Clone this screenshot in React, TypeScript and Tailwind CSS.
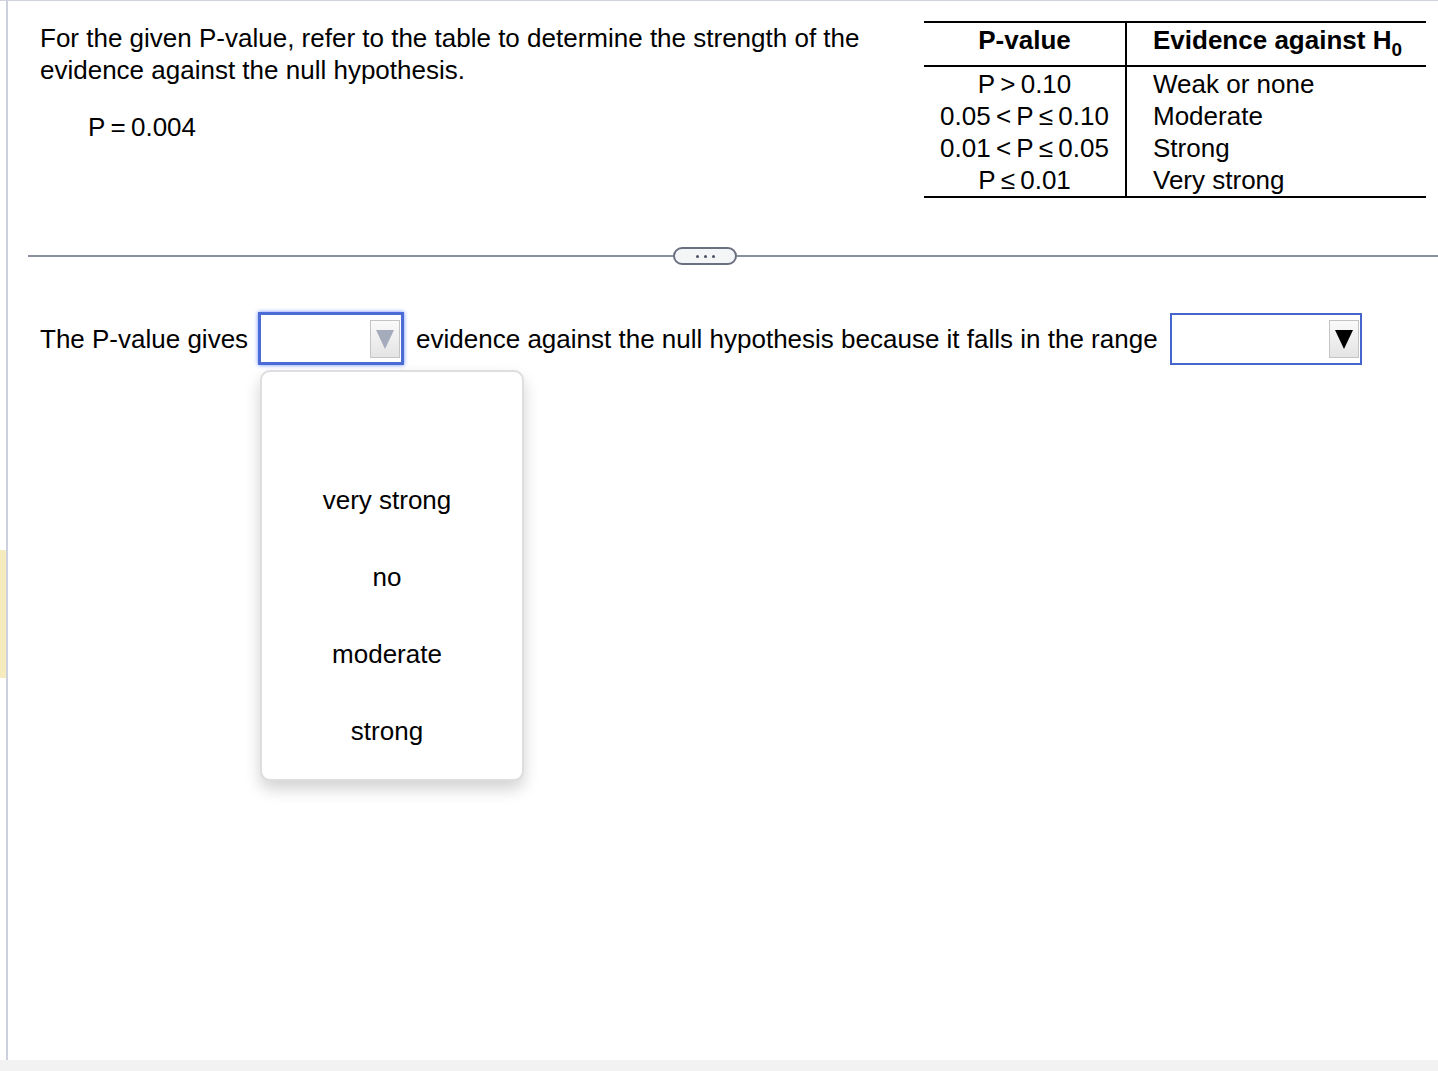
import React from "react";

const T = "\u2009";

function Caret({ color }: { color: string }) {
  return (
    <div className="h-full w-[30px] flex items-center justify-center bg-gradient-to-b from-[#fafafa] to-[#e4e4e4] border border-[#c4c4c4]">
      <svg width="20" height="22" viewBox="0 0 20 22">
        <polygon points="1,2 19,2 10,21" fill={color} />
      </svg>
    </div>
  );
}

export default function App() {
  return (
    <div className="w-[1438px] h-[1071px] bg-white flex flex-col overflow-hidden font-['Liberation_Sans',Arial,sans-serif] text-[26px] text-black">
      <div className="h-px bg-[#cfd3df] shrink-0" />
      <div className="flex flex-1 min-h-0">
        <div className="w-[6px] flex flex-col shrink-0">
          <div className="h-[549px]" />
          <div className="h-[128px] bg-[#f5ebbd]" />
        </div>
        <div className="w-[2px] bg-[#cdd1de] shrink-0" />
        <div className="flex-1 relative">
          {/* top section */}
          <div className="flex justify-between pl-[32px] pr-[12px] pt-[20px]">
            <div className="pt-[1px] leading-[32px] w-[860px]">
              <div>
                For the given P-value, refer to the table to determine the strength of the
                evidence against the null hypothesis.
              </div>
              <div className="pl-[48px] mt-[25px]">P{T}={T}0.004</div>
            </div>
            <div className="w-[502px] shrink-0">
              <div className="flex h-[46px] border-t-2 border-b-2 border-black font-bold leading-[32px]">
                <div className="w-[203px] border-r-2 border-black text-center pt-[1px]">P-value</div>
                <div className="flex-1 pl-[26px] pt-[1px]">
                  Evidence against H
                  <span className="text-[19px] relative top-[7px]">0</span>
                </div>
              </div>
              <div className="flex border-b-2 border-black leading-[32px]">
                <div className="w-[203px] border-r-2 border-black text-center pt-px">
                  <div>P{T}&gt;{T}0.10</div>
                  <div>0.05{T}&lt;{T}P{T}≤{T}0.10</div>
                  <div>0.01{T}&lt;{T}P{T}≤{T}0.05</div>
                  <div>P{T}≤{T}0.01</div>
                </div>
                <div className="flex-1 pl-[26px] pt-px">
                  <div>Weak or none</div>
                  <div>Moderate</div>
                  <div>Strong</div>
                  <div>Very strong</div>
                </div>
              </div>
            </div>
          </div>

          {/* separator */}
          <div className="ml-[20px] mt-[48px] flex items-center h-[20px]">
            <div className="w-[645px] h-[2px] bg-[#8b909e]" />
            <div className="w-[64px] h-[18px] rounded-full border-2 border-[#6b7080] bg-[#f4f5f7] flex items-center justify-center gap-[5px]">
              <span className="w-[3px] h-[3px] rounded-full bg-[#4b5060]" />
              <span className="w-[3px] h-[3px] rounded-full bg-[#4b5060]" />
              <span className="w-[3px] h-[3px] rounded-full bg-[#4b5060]" />
            </div>
            <div className="flex-1 h-[2px] bg-[#8b909e]" />
          </div>

          {/* answer row */}
          <div className="pl-[32px] mt-[46px] flex items-center leading-[32px]">
            <span>The P-value gives</span>
            <div className="ml-[10px] w-[146px] h-[53px] border-[3px] border-[#4a6cd4] shadow-[0_0_4px_#6b8cff] bg-white flex justify-end items-center pr-px">
              <div className="h-[38px]">
                <Caret color="#a4abbb" />
              </div>
            </div>
            <span className="ml-[12px]">evidence against the null hypothesis because it falls in the range</span>
            <div className="ml-[12px] w-[192px] h-[52px] border-2 border-[#4466cc] bg-white flex justify-end items-center pr-px">
              <div className="h-[38px]">
                <Caret color="#000000" />
              </div>
            </div>
          </div>

          {/* dropdown menu */}
          <div className="absolute left-[252px] top-[369px] w-[264px] h-[411px] bg-white border-2 border-[#dedede] rounded-[10px] shadow-[0_8px_16px_rgba(0,0,0,0.18)] pt-[13px] pr-[10px] flex flex-col">
            <div className="h-[77px]" />
            <div className="h-[77px] flex items-center justify-center">very strong</div>
            <div className="h-[77px] flex items-center justify-center">no</div>
            <div className="h-[77px] flex items-center justify-center">moderate</div>
            <div className="h-[77px] flex items-center justify-center">strong</div>
          </div>
        </div>
      </div>
      <div className="h-[11px] bg-[#f2f2f2] shrink-0" />
    </div>
  );
}
